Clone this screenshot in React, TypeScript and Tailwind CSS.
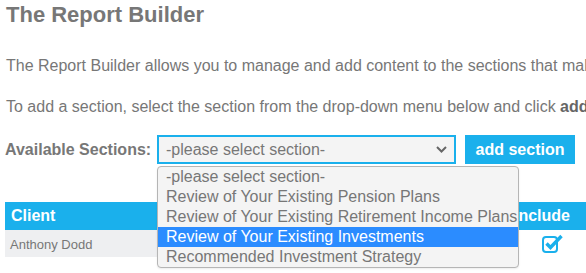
import { useState } from "react";

const sections = [
  "-please select section-",
  "Review of Your Existing Pension Plans",
  "Review of Your Existing Retirement Income Plans",
  "Review of Your Existing Investments",
  "Recommended Investment Strategy",
];

function CheckSquare() {
  return (
    <svg width="22" height="21" viewBox="0 0 22 21" aria-hidden="true">
      <rect x="1" y="4" width="14" height="15" rx="3" fill="none" stroke="#1ab0ec" strokeWidth="2" />
      <path d="M4.5 10.5 L8.5 14.5 L19.5 3" fill="none" stroke="#1ab0ec" strokeWidth="3.4" strokeLinejoin="miter" />
    </svg>
  );
}

export default function App() {
  const [active] = useState(3);

  return (
    <div className="relative w-[586px] h-[273px] overflow-hidden bg-white text-[#777] font-['Liberation_Sans',Arial,sans-serif]">
      <div className="pl-[6px] pt-[2px]">
        <h1 className="text-[22px] leading-[26px] font-bold">The Report Builder</h1>
        <p className="mt-[28px] text-[16px] leading-[20px] whitespace-nowrap">
          The Report Builder allows you to manage and add content to the sections that make up your report.
        </p>
        <p className="mt-[21px] text-[16px] leading-[20px] whitespace-nowrap">
          To add a section, select the section from the drop-down menu below and click <b className="text-[#666]">add section</b>.
        </p>
      </div>

      {/* Section picker */}
      <div className="flex items-center mt-[18px] pl-[5px]">
        <span className="text-[16px] font-bold w-[152px] whitespace-nowrap">Available Sections:</span>
        <div className="flex items-center justify-between w-[299px] h-[29px] border-2 border-[#1ab0ec] bg-[#f4f4f4] pl-[7px] pr-[7px] text-[16px]">
          <span>-please select section-</span>
          <svg width="11" height="7" viewBox="0 0 11 7" aria-hidden="true">
            <path d="M1 1 L5.5 5.5 L10 1" fill="none" stroke="#666" strokeWidth="2" />
          </svg>
        </div>
        <button
          type="button"
          className="ml-[9px] w-[110px] h-[29px] bg-[#1ab0ec] text-white font-bold text-[16px]"
        >
          add section
        </button>
      </div>

      {/* Sections table */}
      <div className="mt-[38px] ml-[5px] w-[593px]">
        <div className="flex h-[28px] items-center bg-[#1ab0ec] text-white font-bold text-[16px]">
          <div className="w-[503px] pl-[6px]">Client</div>
          <div className="pl-[6px]">Include</div>
        </div>
        <div className="flex h-[27px] items-center text-[13px]">
          <div className="w-[503px] h-full flex items-center bg-[#eeeff1] pl-[5px] pt-[2px]">Anthony Dodd</div>
          <div className="w-[90px] flex justify-center">
            <CheckSquare />
          </div>
        </div>
      </div>

      {/* Open drop-down list */}
      <ul className="absolute left-[157px] top-[166px] w-[362px] border border-[#b5b5b5] rounded-[4px] bg-[#f4f4f4] text-[16px] shadow-[0_1px_2px_rgba(0,0,0,0.08)]">
        {sections.map((s, i) => (
          <li
            key={s}
            className={
              i === active
                ? "h-[20px] leading-[20px] pl-[8px] bg-[#2b8cff] text-white whitespace-nowrap"
                : "h-[20px] leading-[20px] pl-[8px] whitespace-nowrap"
            }
          >
            {s}
          </li>
        ))}
      </ul>
    </div>
  );
}
